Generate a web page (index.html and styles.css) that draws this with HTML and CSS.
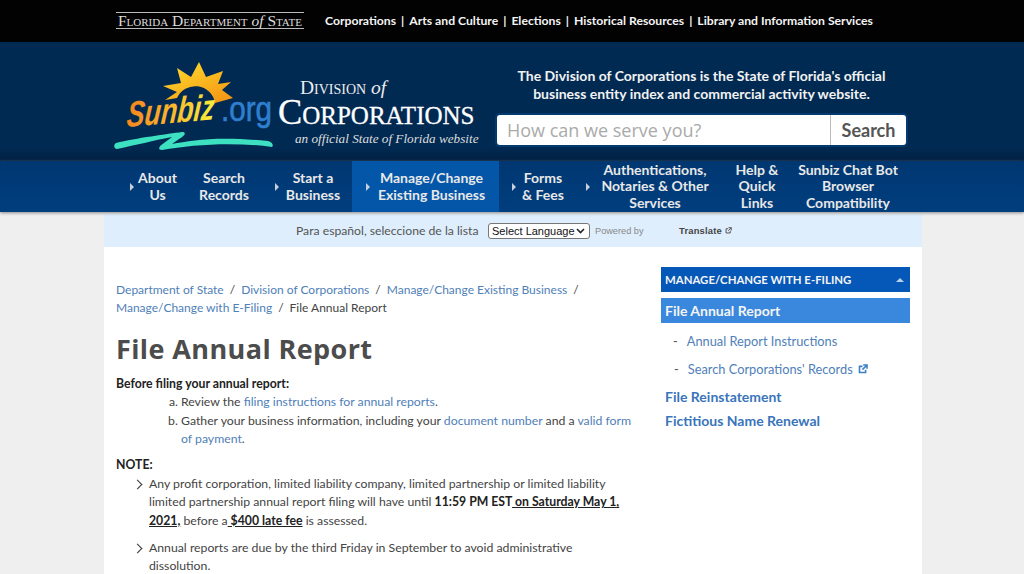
FILE: index.html
```html
<!DOCTYPE html>
<html lang="en">
<head>
<meta charset="utf-8">
<title>File Annual Report - Division of Corporations</title>
<link rel="stylesheet" href="styles.css">
</head>
<body>
<div class="topbar">
  <div class="dept"><span class="dept-text">Florida Department <i>of</i> State</span></div>
  <nav class="toplinks">
    <a>Corporations</a><span>|</span><a>Arts and Culture</a><span>|</span><a>Elections</a><span>|</span><a>Historical Resources</a><span>|</span><a>Library and Information Services</a>
  </nav>
</div>
<header class="masthead">
  <div class="logo">
    <svg class="sunbiz" width="162" height="92" viewBox="0 0 162 92">
      <defs>
        <linearGradient id="sun" x1="0" y1="0" x2="0.7" y2="1"><stop offset="0" stop-color="#ffe02e"/><stop offset="1" stop-color="#f59a16"/></linearGradient>
        <linearGradient id="biz" x1="0" y1="0" x2="1" y2="0"><stop offset="0" stop-color="#f5841e"/><stop offset="0.45" stop-color="#fbb02a"/><stop offset="1" stop-color="#f7ee3a"/></linearGradient>
      </defs>
      <path fill="url(#sun)" d="M50 38L62 30 48 24 66 21 62 6 76 15 84 0 91 15 108 9 103 22 116 20 107 28 118 36 100 41A20 20 0 0 0 62 36z"/>
      <text class="sunbiz-word" textLength="88" lengthAdjust="spacingAndGlyphs" transform="translate(11 65) rotate(-5) skewX(-10)">Sunbiz</text>
      <text class="org-word" x="106" y="59" textLength="51" lengthAdjust="spacingAndGlyphs">.org</text>
      <path fill="#3de0c0" d="M1 81c20-5 52-9 66-11 5 0 3 4-3 7l-7 5c20-4 47-8 96-3 4 1 6 4 4 6-36-5-78-3-110 3-5 0-3-4 2-7l8-6c-16 3-36 8-55 12-3 0-4-4-1-6z"/>
    </svg>
    <div class="wordmark">
      <div class="division">Division <i>of</i></div>
      <div class="corps">Corporations</div>
      <div class="official">an official State of Florida website</div>
    </div>
  </div>
  <div class="tagline-wrap">
    <p class="tagline">The Division of Corporations is the State of Florida's official<br>business entity index and commercial activity website.</p>
    <form class="search">
      <div class="search-input">How can we serve you?</div>
      <div class="search-btn">Search</div>
    </form>
  </div>
</header>
<nav class="mainnav">
  <a class="item w-about"><b class="caret"></b><span>About<br>Us</span></a>
  <a class="item w-search"><span>Search<br>Records</span></a>
  <a class="item w-start"><b class="caret"></b><span>Start a<br>Business</span></a>
  <a class="item w-manage"><b class="caret"></b><span>Manage/Change<br>Existing Business</span></a>
  <a class="item w-forms"><b class="caret"></b><span>Forms<br>&amp; Fees</span></a>
  <a class="item w-auth"><b class="caret"></b><span>Authentications,<br>Notaries &amp; Other<br>Services</span></a>
  <a class="item w-help"><span>Help &amp;<br>Quick<br>Links</span></a>
  <a class="item w-chat"><span>Sunbiz Chat Bot<br>Browser<br>Compatibility</span></a>
</nav>
<div class="page">
  <div class="langbar">
    <span class="lang-label">Para español, seleccione de la lista</span>
    <select class="lang-select"><option>Select Language</option></select>
    <span class="powered">Powered by</span>
    <span class="translate">Translate
      <svg width="7" height="7" viewBox="0 0 10 10"><path d="M7.5 5.5v3h-6v-6h3M5 1h4v4M9 1L4.5 5.5" fill="none" stroke="#555" stroke-width="1.4"/></svg>
    </span>
  </div>
  <div class="columns">
    <main class="content">
      <div class="crumbs">
        <a>Department of State</a><span class="sep">/</span><a>Division of Corporations</a><span class="sep">/</span><a>Manage/Change Existing Business</a><span class="sep">/</span><br><a>Manage/Change with E-Filing</a><span class="sep">/</span><span>File Annual Report</span>
      </div>
      <h1>File Annual Report</h1>
      <p class="lead">Before filing your annual report:</p>
      <ol class="steps">
        <li>Review the <a>filing instructions for annual reports</a>.</li>
        <li>Gather your business information, including your <a>document number</a> and a <a>valid form of payment</a>.</li>
      </ol>
      <p class="note">NOTE:</p>
      <ul class="notes">
        <li>Any profit corporation, limited liability company, limited partnership or limited liability limited partnership annual report filing will have until <strong>11:59 PM EST</strong><strong class="u"> on Saturday May 1, 2021,</strong> before a<strong class="u"> $400 late fee</strong> is assessed.</li>
        <li>Annual reports are due by the third Friday in September to avoid administrative dissolution.</li>
      </ul>
    </main>
    <aside class="side">
      <div class="side-head"><span>MANAGE/CHANGE WITH E-FILING</span><b class="up"></b></div>
      <div class="side-current">File Annual Report</div>
      <div class="side-sub first"><span class="dash">-</span><a>Annual Report Instructions</a></div>
      <div class="side-sub second"><span class="dash">-</span><a>Search Corporations' Records</a>
        <svg width="10" height="10" viewBox="0 0 10 10"><path d="M7.6 5.8v2.7H1.5V2.4h3M5.2 1h3.8v3.8M8.8 1.2L4.4 5.6" fill="none" stroke="#3f7fc4" stroke-width="1.6"/></svg>
      </div>
      <div class="side-link l1">File Reinstatement</div>
      <div class="side-link">Fictitious Name Renewal</div>
    </aside>
  </div>
</div>
</body>
</html>
```
FILE: styles.css
```css
* { box-sizing: border-box; }
html, body { margin: 0; height: 574px; overflow: hidden; }
body { background: #efefef; font-family: "Lato", "Open Sans", sans-serif; color: #444; width: 1024px; }
a { color: #4f80b8; }
.topbar { height: 42px; background: #020202; display: flex; align-items: center; padding-left: 116px; }
.dept { width: 188px; height: 17px; border-top: 1px solid #bbb; border-bottom: 1px solid #bbb; display: flex; align-items: center; justify-content: center; margin-top: -1px; }
.dept-text { font-family: "Liberation Serif", serif; font-variant: small-caps; font-size: 15.5px; color: #ddd; white-space: nowrap; }
.dept-text i { font-variant: normal; }
.toplinks { margin: -2px 0 0 21px; display: flex; gap: 5px; font-size: 12.2px; font-weight: 700; color: #f4f4f4; }
.toplinks a { color: #f4f4f4; }
.masthead { height: 119px; background: linear-gradient(#012a53 88%, #012042); display: flex; padding-left: 115px; }
.logo { display: flex; width: 381px; }
.sunbiz { margin-top: 20px; flex: none; overflow: visible; }
.sunbiz-word { font-family: "Liberation Sans", sans-serif; font-style: italic; font-weight: 700; font-size: 36px; fill: url(#biz); }
.org-word { font-family: "Liberation Sans", sans-serif; font-size: 35px; fill: #2f7fd0; stroke: #2f7fd0; stroke-width: 0.6px; }
.wordmark { margin-left: 1px; font-family: "Liberation Serif", serif; color: #eee; width: 218px; }
.division { font-variant: small-caps; font-size: 19.5px; margin: 34px 0 0 22px; line-height: 24px; }
.division i { font-variant: normal; }
.corps { font-variant: small-caps; font-size: 36.3px; line-height: 30px; color: #fff; white-space: nowrap; margin-top: -3px; -webkit-text-stroke: 0.3px #fff; }
.official { font-style: italic; font-size: 13.2px; line-height: 18px; margin: 3px 0 0 17px; white-space: nowrap; color: #ddd; }
.tagline-wrap { width: 411px; }
.tagline { margin: 25px 0 0; text-align: center; font-size: 14px; line-height: 18px; font-weight: 700; color: #f2f2f2; width: 411px; }
.search { margin: 12px 0 0 1px; display: flex; width: 409px; height: 30px; background: #fff; border-radius: 3px; box-shadow: 0 0 0 2px #033a70; }
.search-input { width: 334px; padding-left: 10px; font-size: 18px; line-height: 30px; color: #aaa; font-family: "Open Sans", sans-serif; border-right: 1px solid #bbb; }
.search-btn { flex: 1; text-align: center; font-size: 18px; font-weight: 700; line-height: 30px; color: #555; }
.mainnav { height: 51px; display: flex; padding-left: 118px; background: linear-gradient(#003771, #013e7e); box-shadow: 0 1px 3px #888; font-size: 14px; line-height: 16.2px; font-weight: 700; text-align: center; position: relative; }
.item { display: flex; align-items: center; justify-content: center; position: relative; flex: none; color: #e8e8e8; white-space: nowrap; }
.caret { position: absolute; top: 22px; border-left: 4px solid #c5d0dc; border-top: 4px solid transparent; border-bottom: 4px solid transparent; }
.w-about { width: 61px; } .w-about .caret { left: 12px; } .w-about span { margin-left: 18px; }
.w-search { width: 66px; margin-left: 12px; }
.w-start { width: 83px; margin-left: 8px; } .w-start .caret { left: 10px; } .w-start span { margin-left: 13px; }
.w-manage { width: 147px; background: #0356a8; margin-left: 4px; } .w-manage .caret { left: 14px; } .w-manage span { margin-left: 12px; }
.w-forms { width: 85px; } .w-forms .caret { left: 13px; } .w-forms span { margin-left: 3px; }
.w-auth { width: 124px; } .w-auth .caret { left: 2px; } .w-auth span { margin-left: 18px; }
.w-help { width: 62px; margin-left: 18px; }
.w-chat { width: 100px; margin-left: 10px; }
.page { width: 818px; margin: 2px 0 0 104px; background: #fff; height: 360px; }
.langbar { height: 33px; background: #deeefc; display: flex; align-items: center; font-size: 12.2px; color: #555; padding-left: 192px; }
.lang-label { width: 192px; white-space: nowrap; }
.lang-select { appearance: none; -webkit-appearance: none; width: 102px; height: 16px; font-family: "Liberation Sans", sans-serif; font-size: 11px; padding: 0 0 0 3px; border: 1px solid #777; border-radius: 3px; color: #111; background: #fff url("data:image/svg+xml,%3Csvg xmlns='http://www.w3.org/2000/svg' width='9' height='6'%3E%3Cpath d='M1 1l3.5 3.5L8 1' fill='none' stroke='%23222' stroke-width='1.6'/%3E%3C/svg%3E") no-repeat right 4px center; }
.powered { margin-left: 5px; width: 84px; font-family: "Liberation Sans", sans-serif; font-size: 9.2px; color: #888; }
.translate { font-family: "Liberation Sans", sans-serif; font-size: 9.4px; font-weight: 700; color: #444; letter-spacing: 0.2px; }
.columns { display: flex; }
.content { width: 557px; padding: 34px 22px 0 12px; font-size: 12.25px; line-height: 18.4px; flex: none; }
.crumbs { color: #444; font-size: 12px; white-space: nowrap; }
.sep { margin: 0 6px; }
h1 { margin: 14px 0 9px; font-family: "Open Sans", sans-serif; font-weight: 700; font-size: 27px; line-height: 34px; color: #4c4c4c; letter-spacing: 0.4px; }
.lead { margin: 0; font-weight: 700; color: #222; }
.steps { margin: 0 0 8px; padding-left: 65px; list-style-type: lower-alpha; }
.note { margin: 0; font-weight: 700; color: #222; }
.notes { list-style: none; margin: 0; padding: 0 0 0 33px; }
.notes li { position: relative; margin-bottom: 9px; padding-right: 9px; }
.notes li::before { content: ""; position: absolute; left: -15px; top: 6px; width: 6px; height: 6px; border-top: 1.5px solid #333; border-right: 1.5px solid #333; transform: rotate(45deg); }
.notes strong { color: #222; }
.u { text-decoration: underline; }
.side { width: 249px; padding-top: 20px; }
.side-head { height: 25px; background: #0557b8; color: #f4f4f4; font-size: 11.4px; font-weight: 700; line-height: 25px; padding: 0 5px 0 4px; display: flex; justify-content: space-between; align-items: center; }
.up { border-left: 4px solid transparent; border-right: 4px solid transparent; border-bottom: 4px solid #b9cfea; margin-right: 1px; }
.side-current { margin-top: 6px; height: 25px; background: #3a88dd; color: #f4f4f4; font-size: 14px; font-weight: 700; line-height: 25px; padding-left: 4px; }
.side-sub { font-size: 12.8px; line-height: 18px; color: #4f80b8; white-space: nowrap; }
.side-sub .dash { color: #555; margin-right: 9px; }
.side-sub.first { margin-top: 9px; padding-left: 12px; }
.side-sub.second { margin-top: 10px; padding-left: 13px; }
.side-sub svg { margin-left: 2px; }
.side-link { font-size: 14px; font-weight: 700; line-height: 18px; color: #3a74bb; padding-left: 4px; margin-top: 6px; }
.side-link.l1 { margin-top: 10px; }
```
